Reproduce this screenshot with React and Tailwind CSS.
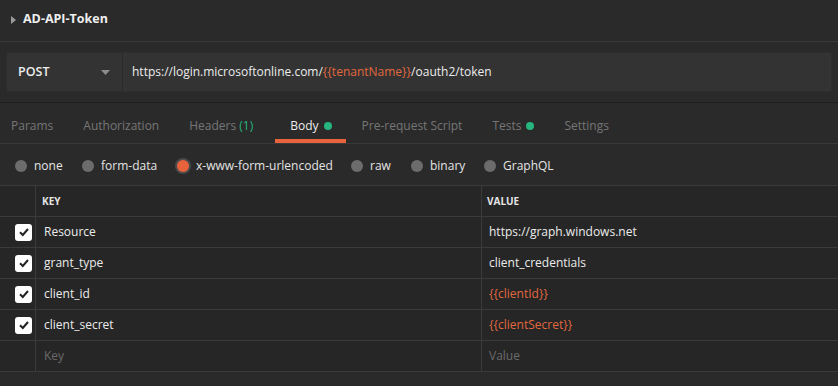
import React from "react";

const Check = () => (
  <div className="w-[17px] h-[17px] rounded-[3px] bg-white flex items-center justify-center">
    <svg width="12" height="12" viewBox="0 0 12 12">
      <path d="M2 6.2 L4.8 9 L10 3" stroke="#222" strokeWidth="2" fill="none" />
    </svg>
  </div>
);

const Radio = ({ label, active, w }) => (
  <div className={"flex items-center gap-[7px] shrink-0 " + w}>
    <div
      className={
        "w-[12px] h-[12px] rounded-full " +
        (active ? "bg-[#e8623b] ring-2 ring-[#4a4a4a]" : "bg-[#6c6c6c]")
      }
    />
    <span className="text-[12px] text-[#e4e4e4]">{label}</span>
  </div>
);

const rows = [
  { k: "Resource", v: "https://graph.windows.net", var: false },
  { k: "grant_type", v: "client_credentials", var: false },
  { k: "client_id", v: "{{clientId}}", var: true },
  { k: "client_secret", v: "{{clientSecret}}", var: true },
];

export default function App() {
  return (
    <div
      className="w-[838px] h-[386px] bg-[#2a2a2a] overflow-hidden text-[#e4e4e4]"
      style={{ fontFamily: '"Open Sans", sans-serif' }}
    >
      {/* title */}
      <div className="h-[42px] border-b border-[#3a3a3a] flex items-center pl-[11px] pb-[2px]">
        <svg width="6" height="8" viewBox="0 0 6 8" className="mr-[6px]">
          <path d="M0 0 L5 4 L0 8 Z" fill="#9a9a9a" />
        </svg>
        <span className="text-[12.5px] font-bold text-[#efefef]">AD-API-Token</span>
      </div>

      {/* url bar */}
      <div className="h-[61px] border-b border-[#1f1f1f] pt-[10px] px-[6px]">
        <div className="h-[40px] flex bg-[#333333] border border-[#2e2e2e] rounded-[2px]">
          <div className="w-[116px] flex items-center justify-between pl-[11px] pr-[12px] border-r border-[#2a2a2a]">
            <span className="text-[12.5px] font-semibold text-[#ececec]">POST</span>
            <svg width="9" height="5" viewBox="0 0 9 5">
              <path d="M0 0 L9 0 L4.5 5 Z" fill="#8c8c8c" />
            </svg>
          </div>
          <div className="flex items-center pl-[9px] text-[12px] text-[#ececec]">
            https://login.microsoftonline.com/
            <span className="text-[#e2683f]">{"{{tenantName}}"}</span>
            /oauth2/token
          </div>
        </div>
      </div>

      {/* tabs */}
      <div className="h-[41px] border-b border-[#3a3a3a] flex items-center pt-[5px] pl-[11px] gap-[30px] text-[12px] text-[#767676]">
        <span>Params</span>
        <span>Authorization</span>
        <span className="mr-[2px]">
          Headers <span className="text-[#26b47f]">(1)</span>
        </span>
        <span className="relative text-[#ececec] flex items-center gap-[5px] ml-[5px]">
          Body
          <span className="w-[8px] h-[8px] rounded-full bg-[#26b47f]" />
          <span className="absolute left-[-15px] right-[-14px] top-[22px] h-[4px] bg-[#e8623b]" />
        </span>
        <span>Pre-request Script</span>
        <span className="flex items-center gap-[5px]">
          Tests
          <span className="w-[8px] h-[8px] rounded-full bg-[#26b47f]" />
        </span>
        <span>Settings</span>
      </div>

      {/* radios */}
      <div className="h-[41px] flex items-center pt-[3px] pl-[15px]">
        <Radio label="none" w="w-[67px]" />
        <Radio label="form-data" w="w-[95px]" />
        <Radio label="x-www-form-urlencoded" active w="w-[174px]" />
        <Radio label="raw" w="w-[60px]" />
        <Radio label="binary" w="w-[73px]" />
        <Radio label="GraphQL" w="w-[80px]" />
      </div>

      {/* table */}
      <div className="bg-[#262626] border-t border-[#3a3a3a]">
        <div className="h-[31px] flex border-b border-[#3a3a3a] text-[10px] font-bold text-[#e4e4e4]">
          <div className="w-[36px] border-r border-[#3a3a3a]" />
          <div className="w-[446px] border-r border-[#3a3a3a] flex items-center pl-[6px]">KEY</div>
          <div className="flex-1 flex items-center pl-[5px]">VALUE</div>
        </div>
        {rows.map((r) => (
          <div key={r.k} className="h-[31px] flex border-b border-[#3a3a3a] text-[12px]">
            <div className="w-[36px] border-r border-[#3a3a3a] flex items-center pl-[15px]">
              <Check />
            </div>
            <div className="w-[446px] border-r border-[#3a3a3a] flex items-center pl-[8px] text-[#ececec]">
              {r.k}
            </div>
            <div
              className={
                "flex-1 flex items-center pl-[7px] " +
                (r.var ? "text-[#e2683f]" : "text-[#ececec]")
              }
            >
              {r.v}
            </div>
          </div>
        ))}
        <div className="h-[31px] flex border-b border-[#3a3a3a] text-[12px] text-[#6a6a6a]">
          <div className="w-[36px] border-r border-[#3a3a3a]" />
          <div className="w-[446px] border-r border-[#3a3a3a] flex items-center pl-[8px]">Key</div>
          <div className="flex-1 flex items-center pl-[7px]">Value</div>
        </div>
      </div>
    </div>
  );
}
